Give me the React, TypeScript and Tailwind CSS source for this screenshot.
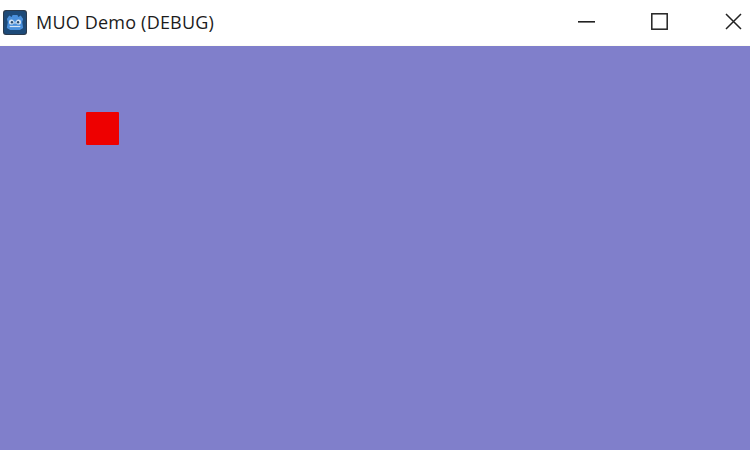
const GodotIcon = () => (
  <svg width="24" height="25" viewBox="0 0 25 25" preserveAspectRatio="none" className="shrink-0">
    <rect x="0" y="0" width="25" height="25" rx="3" fill="#2b3a4c" />
    <rect x="1" y="1" width="23" height="23" rx="2.5" fill="#1d4a78" />
    {/* godot head */}
    <path
      d="M4 9 L6.5 5.5 L9 7 L10 5 L15 5 L16 7 L18.5 5.5 L21 9 L20 12 L21 18 L17.5 20 L7.5 20 L4 18 L5 12 Z"
      fill="#4a90dc"
    />
    <circle cx="8.8" cy="12" r="2.6" fill="#d5e4f3" />
    <circle cx="16.2" cy="12" r="2.6" fill="#d5e4f3" />
    <circle cx="9.3" cy="12.3" r="1.2" fill="#2a4a6a" />
    <circle cx="15.7" cy="12.3" r="1.2" fill="#2a4a6a" />
    <rect x="11.8" y="11.5" width="1.4" height="2.2" fill="#d5e4f3" />
    <path d="M7 16.5 H18" stroke="#d5e4f3" strokeWidth="1.2" />
  </svg>
);

const WindowButtons = () => (
  <div className="flex items-center h-full">
    <svg width="17" height="2" viewBox="0 0 17 2" className="mr-[56px] mb-[2px]">
      <rect width="17" height="1.6" fill="#222222" />
    </svg>
    <svg width="17" height="17" viewBox="0 0 17 17" className="mr-[57px] mb-[2px]">
      <rect x="0.8" y="0.8" width="15.4" height="15.4" fill="none" stroke="#222222" strokeWidth="1.5" />
    </svg>
    <svg width="17" height="17" viewBox="0 0 17 17" className="mr-[8px] mb-[2px]">
      <path d="M1 1 L16 16 M16 1 L1 16" stroke="#222222" strokeWidth="1.5" fill="none" />
    </svg>
  </div>
);

export default function App() {
  return (
    <div className="w-[750px] h-[450px] flex flex-col overflow-hidden bg-[#807fcb]">
      <div className="h-[46px] bg-white border-b border-[#fdfdf5] flex items-center justify-between shrink-0">
        <div className="flex items-center pl-[3px]">
          <GodotIcon />
          <span className="ml-[9px] text-[#1c1c1c] text-[18px] font-['Open_Sans',sans-serif] tracking-[0.2px]">
            MUO Demo (DEBUG)
          </span>
        </div>
        <WindowButtons />
      </div>
      <div className="relative flex-1">
        <div className="absolute left-[86px] top-[66px] w-[33px] h-[33px] bg-[#ee0000] rounded-[1px]" />
      </div>
    </div>
  );
}
